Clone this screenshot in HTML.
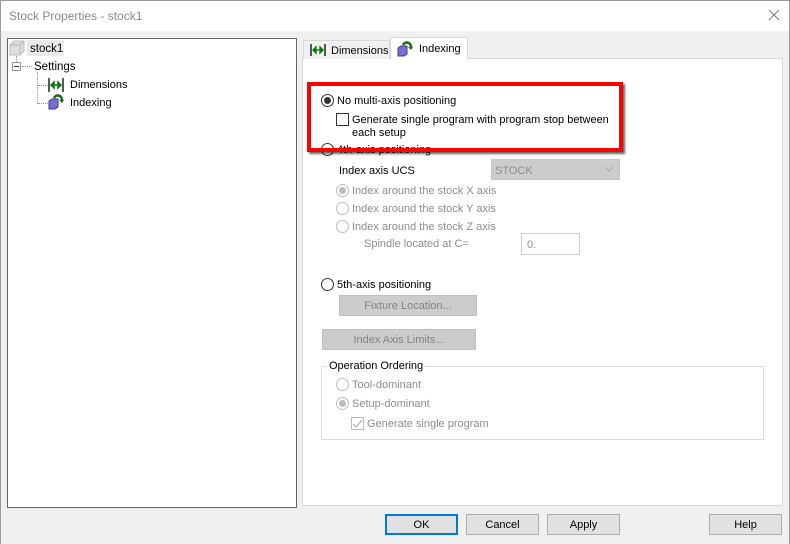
<!DOCTYPE html>
<html><head><style>
*{margin:0;padding:0;box-sizing:border-box}
body{width:790px;height:544px;overflow:hidden;background:#f0f0f0;font-family:"Liberation Sans",sans-serif;font-size:11px;color:#000;position:relative}
.a{position:absolute;white-space:nowrap}
.t{margin-top:1px}
.win{position:absolute;left:0;top:0;width:790px;height:544px;border:1px solid #9a9a9a;border-bottom:none}
.title{position:absolute;left:1px;top:1px;width:788px;height:30px;background:#fff}
.g{color:#8d8d8d}
.rad{position:absolute;width:13px;height:13px;border:1px solid #333;border-radius:50%;background:#fff}
.rad.dis{border-color:#bcbcbc}
.rad.on::after{content:"";position:absolute;left:2px;top:2px;width:7px;height:7px;border-radius:50%;background:#333}
.rad.dis.on::after{background:#bcbcbc}
.btn{position:absolute;border:1px solid #adadad;background:#e1e1e1;text-align:center;line-height:21px}
.btn.dis{background:#cccccc;border-color:#bfbfbf;color:#838383}
</style></head><body>
<div class="win"></div>
<div class="title"></div>
<div class="a" style="left:9px;top:9px;font-size:12px;color:#8a8a8a">Stock Properties - stock1</div>
<svg class="a" style="left:768px;top:9px" width="12" height="12"><path d="M1 1L11 11M11 1L1 11" stroke="#777" stroke-width="1"/></svg>

<!-- tree -->
<div class="a" style="left:7px;top:38px;width:290px;height:470px;background:#fff;border:1px solid #646464"></div>
<svg class="a" style="left:8px;top:40px" width="18" height="16"><path d="M2 5L6 1H16V11L12 15H2Z" fill="#ddd" stroke="#bbb"/><path d="M2 5H12V15M12 5L16 1" fill="none" stroke="#bbb"/></svg>
<div class="a" style="left:27px;top:40px;width:37px;height:16px;background:#eaeaea"></div>
<div class="a" style="left:30px;top:43px;font-size:11.5px">stock1</div>
<div class="a" style="left:12px;top:62px;width:9px;height:9px;border:1px solid #999;background:#fff"></div>
<div class="a" style="left:14px;top:66px;width:5px;height:1px;background:#333"></div>
<div class="a" style="left:16px;top:56px;height:6px;border-left:1px dotted #999"></div>
<div class="a" style="left:22px;top:66px;width:10px;border-top:1px dotted #999"></div>
<div class="a" style="left:34px;top:61px;font-size:11.5px">Settings</div>
<div class="a" style="left:37px;top:72px;height:32px;border-left:1px dotted #999"></div>
<div class="a" style="left:38px;top:85px;width:10px;border-top:1px dotted #999"></div>
<div class="a" style="left:38px;top:103px;width:10px;border-top:1px dotted #999"></div>
<svg class="a" style="left:48px;top:77px" width="16" height="16"><path d="M1 1V15M15 1V15" stroke="#000" stroke-width="1.3"/><path d="M3 8H13M3 8L6 5V11ZM13 8L10 5V11Z" stroke="#0a7a0a" fill="#0a7a0a" stroke-width="1.5"/></svg>
<div class="a" style="left:70px;top:79px">Dimensions</div>
<svg class="a" style="left:47px;top:93px" width="18" height="18"><path d="M2 8L5 6H11V14L8 16H2Z" fill="#7a6fd0" stroke="#3a3a8a"/><path d="M7 5C9 1 15 2 15 7" fill="none" stroke="#1a6a1a" stroke-width="2.5"/><path d="M12 7H17L15 10Z" fill="#1a6a1a"/></svg>
<div class="a" style="left:70px;top:97px">Indexing</div>

<!-- tabs -->
<div class="a" style="left:302px;top:58px;width:481px;height:448px;background:#fff;border:1px solid #d9d9d9"></div>
<div class="a" style="left:303px;top:40px;width:87px;height:19px;background:#f0f0f0;border:1px solid #d9d9d9;border-bottom:none"></div>
<svg class="a" style="left:310px;top:43px" width="16" height="14"><path d="M1 1V13M15 1V13" stroke="#000" stroke-width="1.3"/><path d="M3 7H13M3 7L6 4V10ZM13 7L10 4V10Z" stroke="#0a7a0a" fill="#0a7a0a" stroke-width="1.3"/></svg>
<div class="a" style="left:331px;top:45px">Dimensions</div>
<div class="a" style="left:390px;top:37px;width:78px;height:22px;background:#fff;border:1px solid #d9d9d9;border-bottom:none"></div>
<svg class="a" style="left:396px;top:40px" width="18" height="18"><path d="M2 8L5 6H11V14L8 16H2Z" fill="#7a6fd0" stroke="#3a3a8a"/><path d="M7 5C9 1 15 2 15 7" fill="none" stroke="#1a6a1a" stroke-width="2.5"/><path d="M12 7H17L15 10Z" fill="#1a6a1a"/></svg>
<div class="a" style="left:419px;top:43px">Indexing</div>

<!-- content -->
<div class="rad on" style="left:321px;top:94px"></div>
<div class="a" style="left:337px;top:95px">No multi-axis positioning</div>
<div class="a" style="left:336px;top:113px;width:13px;height:13px;border:1px solid #333;background:#fff"></div>
<div class="a" style="left:352px;top:114px">Generate single program with program stop between</div>
<div class="a" style="left:352px;top:127px">each setup</div>
<div class="rad" style="left:321px;top:143px"></div>
<div class="a" style="left:337px;top:144px">4th-axis positioning</div>
<div class="a" style="left:307px;top:82px;width:316px;height:70px;border:4px solid #f00;box-shadow:2px 2px 2px rgba(0,0,0,.6)"></div>

<div class="a" style="left:339px;top:165px">Index axis UCS</div>
<div class="a" style="left:491px;top:159px;width:129px;height:21px;background:#cccccc;border:1px solid #c4c4c4"></div>
<div class="a g" style="left:495px;top:165px">STOCK</div>
<svg class="a" style="left:604px;top:166px" width="10" height="6"><path d="M1 1L5 5L9 1" fill="none" stroke="#aaa"/></svg>
<div class="rad dis on" style="left:336px;top:184px"></div>
<div class="a g" style="left:352px;top:185px">Index around the stock X axis</div>
<div class="rad dis" style="left:336px;top:202px"></div>
<div class="a g" style="left:352px;top:203px">Index around the stock Y axis</div>
<div class="rad dis" style="left:336px;top:220px"></div>
<div class="a g" style="left:352px;top:221px">Index around the stock Z axis</div>
<div class="a g" style="left:364px;top:238px">Spindle located at C=</div>
<div class="a" style="left:521px;top:233px;width:59px;height:22px;border:1px solid #ccc;background:#fff"></div>
<div class="a g" style="left:527px;top:239px">0.</div>

<div class="rad" style="left:321px;top:278px"></div>
<div class="a" style="left:337px;top:279px">5th-axis positioning</div>
<div class="btn dis" style="left:339px;top:295px;width:138px;height:21px">Fixture Location...</div>
<div class="btn dis" style="left:322px;top:329px;width:154px;height:21px">Index Axis Limits...</div>

<div class="a" style="left:321px;top:366px;width:443px;height:74px;border:1px solid #dcdcdc"></div>
<div class="a" style="left:327px;top:360px;background:#fff;padding:0 2px">Operation Ordering</div>
<div class="rad dis" style="left:336px;top:378px"></div>
<div class="a g" style="left:352px;top:379px">Tool-dominant</div>
<div class="rad dis on" style="left:336px;top:397px"></div>
<div class="a g" style="left:352px;top:398px">Setup-dominant</div>
<div class="a" style="left:351px;top:417px;width:13px;height:13px;border:1px solid #bcbcbc;background:#fff"></div>
<svg class="a" style="left:352px;top:418px" width="11" height="11"><path d="M1 6L4 9L10 2" fill="none" stroke="#aaa"/></svg>
<div class="a g" style="left:367px;top:418px">Generate single program</div>

<!-- buttons -->
<div class="btn" style="left:385px;top:514px;width:73px;height:21px;border:2px solid #0078d7;line-height:19px">OK</div>
<div class="btn" style="left:466px;top:514px;width:73px;height:21px">Cancel</div>
<div class="btn" style="left:547px;top:514px;width:73px;height:21px">Apply</div>
<div class="btn" style="left:709px;top:514px;width:73px;height:21px">Help</div>
</body></html>
